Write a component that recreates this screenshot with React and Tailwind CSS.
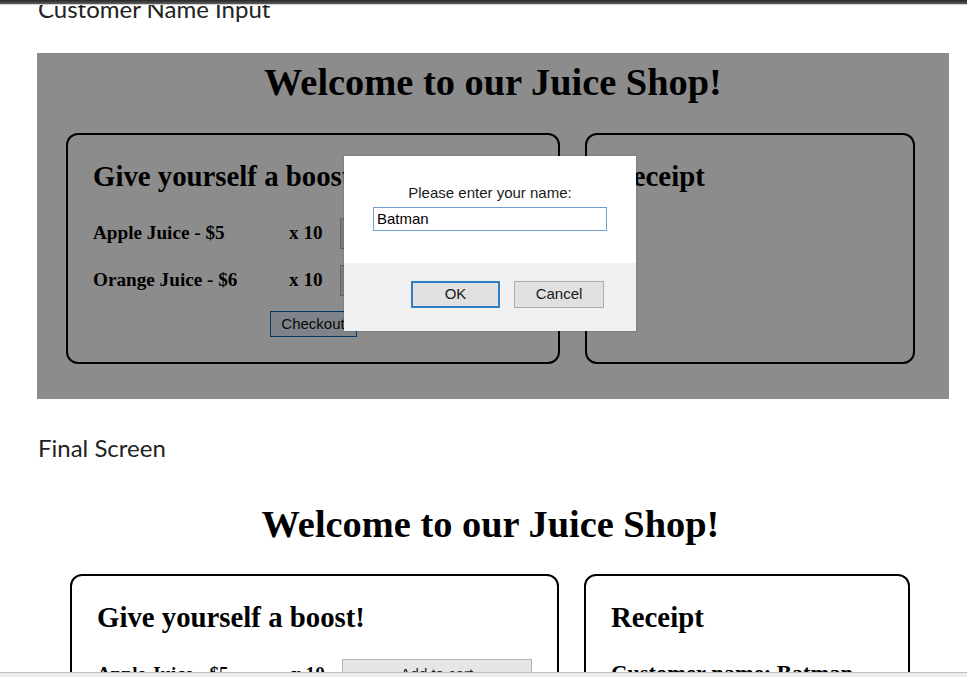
import React from "react";

const serif = "font-['Liberation_Serif',serif]";
const sans = "font-['Liberation_Sans',Arial,sans-serif]";
const lato = "font-['Lato',sans-serif]";

function ItemRow({ label }) {
  return (
    <div className={`flex items-center h-[31px] ${serif} font-bold text-[19.2px] text-black`}>
      <div className="w-[196px] whitespace-nowrap">{label}</div>
      <div className="w-[51px] whitespace-nowrap">x 10</div>
      <div className={`w-[192px] h-[31px] flex items-center justify-center bg-[#e6e6e6] border border-[#b4b4b4] ${sans} font-normal text-[15px] text-[#222]`}>
        Add to cart
      </div>
    </div>
  );
}

function ShopCard({ width, withCheckout }) {
  return (
    <div className={`${width} border-2 border-black rounded-[12px] px-[25px] pt-[24px] pb-[25px] flex flex-col`}>
      <h2 className={`${serif} font-bold text-[28.8px] leading-[34px] whitespace-nowrap text-black`}>
        Give yourself a boost!
      </h2>
      <div className="mt-[25px] flex flex-col gap-[16px]">
        <ItemRow label="Apple Juice - $5" />
        <ItemRow label="Orange Juice - $6" />
      </div>
      {withCheckout && (
        <div className="mt-[15px] flex justify-center">
          <div className={`w-[87px] h-[26px] flex items-center justify-center bg-[#e5f1fb] border border-[#0a64b4] ${sans} text-[15px] text-[#111]`}>
            Checkout
          </div>
        </div>
      )}
    </div>
  );
}

function ReceiptCard({ width, name }) {
  return (
    <div className={`${width} border-2 border-black rounded-[12px] px-[25px] pt-[24px] pb-[25px] flex flex-col`}>
      <h2 className={`${serif} font-bold text-[28.8px] leading-[34px] whitespace-nowrap text-black`}>Receipt</h2>
      {name && (
        <h3 className={`mt-[26px] ${serif} font-bold text-[22.5px] leading-[27px] whitespace-nowrap text-black`}>
          Customer name: {name}
        </h3>
      )}
    </div>
  );
}

function Title() {
  return (
    <h1 className={`${serif} font-bold text-[38.4px] leading-[44px] text-center text-black whitespace-nowrap`}>
      Welcome to our Juice Shop!
    </h1>
  );
}

export default function App() {
  return (
    <div className="relative w-[967px] h-[677px] overflow-hidden bg-white">
      {/* top shadow bar */}
      <div className="absolute top-0 left-0 right-0 z-20">
        <div className="h-[4px] bg-gradient-to-b from-[#262626] to-[#5e5e5e]" />
        <div className="h-[1px] bg-[#d0d0d0]" />
      </div>

      <div className={`-mt-[5px] pl-[38px] ${lato} text-[24px] leading-[28px] text-[#222]`}>
        Customer Name Input
      </div>

      {/* dimmed panel with prompt */}
      <div className="relative mt-[30px] ml-[37px] w-[912px] h-[346px] bg-white overflow-hidden">
        <div className="pt-[7px]">
          <Title />
        </div>
        <div className="mt-[29px] pl-[29px] flex gap-[25px]">
          <ShopCard width="w-[494px]" withCheckout />
          <ReceiptCard width="w-[330px]" />
        </div>
        <div className="absolute inset-0 bg-black/[0.45]" />

        {/* prompt dialog */}
        <div className={`absolute left-[307px] top-[103px] w-[292px] h-[175px] flex flex-col shadow-[0_0_2px_rgba(0,0,0,0.25)] ${sans}`}>
          <div className="h-[107px] bg-white flex flex-col items-center pt-[28px]">
            <div className="text-[15px] leading-[18px] text-[#1a1a1a]">Please enter your name:</div>
            <div className="mt-[5px] w-[234px] h-[24px] border border-[#6e9fcf] bg-white px-[3px] flex items-center text-[15px] text-black">
              Batman
            </div>
          </div>
          <div className="flex-1 bg-[#f0f0f0] flex justify-end items-start pt-[18px] pr-[32px] gap-[14px]">
            <div className="w-[89px] h-[27px] border-2 border-[#2f7fc6] bg-[#e1e1e1] flex items-center justify-center text-[15px] text-[#1a1a1a]">
              OK
            </div>
            <div className="w-[90px] h-[27px] border border-[#adadad] bg-[#e1e1e1] flex items-center justify-center text-[15px] text-[#1a1a1a]">
              Cancel
            </div>
          </div>
        </div>
      </div>

      <div className={`mt-[35px] pl-[38px] ${lato} text-[24px] leading-[28px] text-[#222]`}>
        Final Screen
      </div>

      <div className="mt-[40px] w-[981px]">
        <Title />
      </div>

      <div className="mt-[28px] pl-[70px] flex gap-[25px]">
        <ShopCard width="w-[489px]" withCheckout />
        <ReceiptCard width="w-[326px]" name="Batman" />
      </div>

      {/* bottom bar */}
      <div className="absolute bottom-0 left-0 right-0 h-[5px] border-t border-[#bdbdbd] bg-[#ececec] z-20" />
    </div>
  );
}
